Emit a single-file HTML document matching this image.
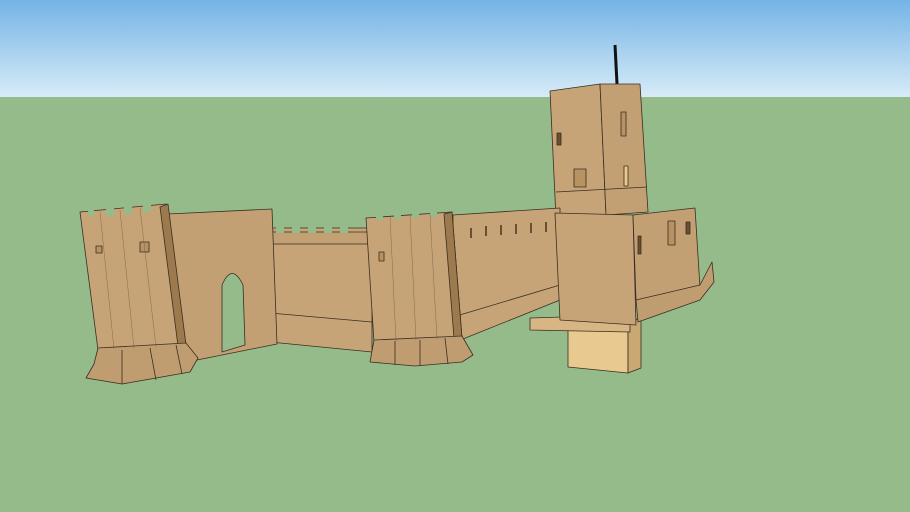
<!DOCTYPE html>
<html><head><style>html,body{margin:0;padding:0;width:910px;height:512px;overflow:hidden}</style></head><body>
<svg width="910" height="512" viewBox="0 0 910 512" xmlns="http://www.w3.org/2000/svg">
<defs>
<linearGradient id="sky" x1="0" y1="0" x2="0" y2="1"><stop offset="0" stop-color="#74b3e6"/><stop offset="1" stop-color="#d8ecf7"/></linearGradient>
</defs>
<rect width="910" height="98" fill="url(#sky)"/>
<rect y="97" width="910" height="415" fill="#95bb8b"/>
<g stroke="#3a2e20" stroke-width="0.8" stroke-linejoin="round">
<polygon points="568,322 628,322 628,373 568,367" fill="#e8c98f"/>
<polygon points="628,322 641,318 641,368 628,373" fill="#c9a874"/>
<polygon points="530,318 630,315 630,332 530,330" fill="#d8b684"/>
<line x1="615" y1="45" x2="617" y2="84" stroke="#111" stroke-width="3"/>
<polygon points="550,91 600,84 606,215 556,218" fill="#c6a478"/>
<polygon points="600,84 640,84 648,212 606,215" fill="#c3a074"/>
<line x1="556" y1="192" x2="647" y2="187"/>
<rect x="574" y="169" width="12" height="18" fill="#b89262"/>
<rect x="557" y="133" width="4" height="12" fill="#6a5030"/>
<rect x="621" y="112" width="5" height="24" fill="#b89262"/>
<rect x="624" y="166" width="4" height="20" fill="#e8c98f"/>
<polygon points="453,215 560,208 560,300 453,343" fill="#c6a478"/>
<line x1="453" y1="317" x2="560" y2="285"/>
<polygon points="555,213 633,215 636,325 560,320" fill="#c6a478"/>
<polygon points="633,215 695,208 700,288 636,300" fill="#c3a074"/>
<polygon points="636,300 700,285 712,262 714,282 700,300 638,322" fill="#c09d70"/>
<rect x="668" y="221" width="7" height="24" fill="#b89262"/>
<rect x="638" y="236" width="3" height="18" fill="#6a5030"/>
<rect x="686" y="222" width="4" height="12" fill="#6a5030"/>
<polygon points="266,228 372,228 372,352 270,342" fill="#c6a478"/>
<polygon points="268,232 370,232 370,244 268,244" fill="#c3a074"/>
<g fill="#95bb8b" stroke="none"><rect x="276" y="226" width="8" height="7"/><rect x="292" y="226" width="8" height="7"/><rect x="308" y="226" width="8" height="7"/><rect x="324" y="226" width="8" height="7"/><rect x="340" y="226" width="8" height="7"/></g>
<line x1="270" y1="313" x2="372" y2="322"/>
<polygon points="168,214 272,209 277,344 172,365" fill="#c3a074"/>
<path d="M222,352 L222,285 Q232,262 243,285 L245,345 Z" fill="#95bb8b"/>
<polygon points="80,212 166,204 186,345 98,350" fill="#c6a478"/>
<polygon points="160,207 168,204 186,345 178,346" fill="#9c7a4e"/>
<polygon points="98,348 186,343 198,358 190,372 122,384 86,378 94,364" fill="#c09d70"/>
<line x1="122" y1="350" x2="122" y2="384"/><line x1="150" y1="348" x2="156" y2="380"/><line x1="176" y1="345" x2="182" y2="374"/>
<g fill="#95bb8b" stroke="none"><rect x="88" y="206" width="6" height="10"/><rect x="106" y="205" width="8" height="11"/><rect x="124" y="203" width="8" height="11"/><rect x="143" y="201" width="8" height="11"/></g>
<rect x="96" y="246" width="6" height="7" fill="#b89262"/><rect x="140" y="242" width="9" height="10" fill="#b89262"/>
<polygon points="366,218 452,212 462,338 374,342" fill="#c6a478"/>
<polygon points="444,214 452,212 462,338 454,338" fill="#9c7a4e"/>
<polygon points="374,340 462,336 473,355 462,362 415,366 370,362" fill="#c09d70"/>
<line x1="395" y1="341" x2="395" y2="365"/><line x1="420" y1="340" x2="420" y2="366"/><line x1="445" y1="338" x2="448" y2="364"/>
<g fill="#95bb8b" stroke="none"><rect x="376" y="212" width="7" height="8"/><rect x="394" y="211" width="7" height="8"/><rect x="412" y="210" width="7" height="8"/><rect x="430" y="209" width="7" height="8"/></g>
<rect x="379" y="252" width="5" height="9" fill="#b89262"/>
</g>
<g stroke="#5a4630" stroke-width="0.5" opacity="0.6">
<line x1="100" y1="212" x2="114" y2="349"/><line x1="120" y1="210" x2="134" y2="348"/><line x1="140" y1="208" x2="156" y2="347"/>
<line x1="390" y1="216" x2="396" y2="341"/><line x1="410" y1="215" x2="416" y2="340"/><line x1="430" y1="214" x2="437" y2="339"/>
</g>
<g fill="#6a5030"><rect x="470" y="228" width="2" height="10"/><rect x="485" y="226" width="2" height="10"/><rect x="500" y="225" width="2" height="10"/><rect x="515" y="224" width="2" height="10"/><rect x="530" y="223" width="2" height="10"/><rect x="545" y="222" width="2" height="10"/></g>
</svg>
</body></html>
